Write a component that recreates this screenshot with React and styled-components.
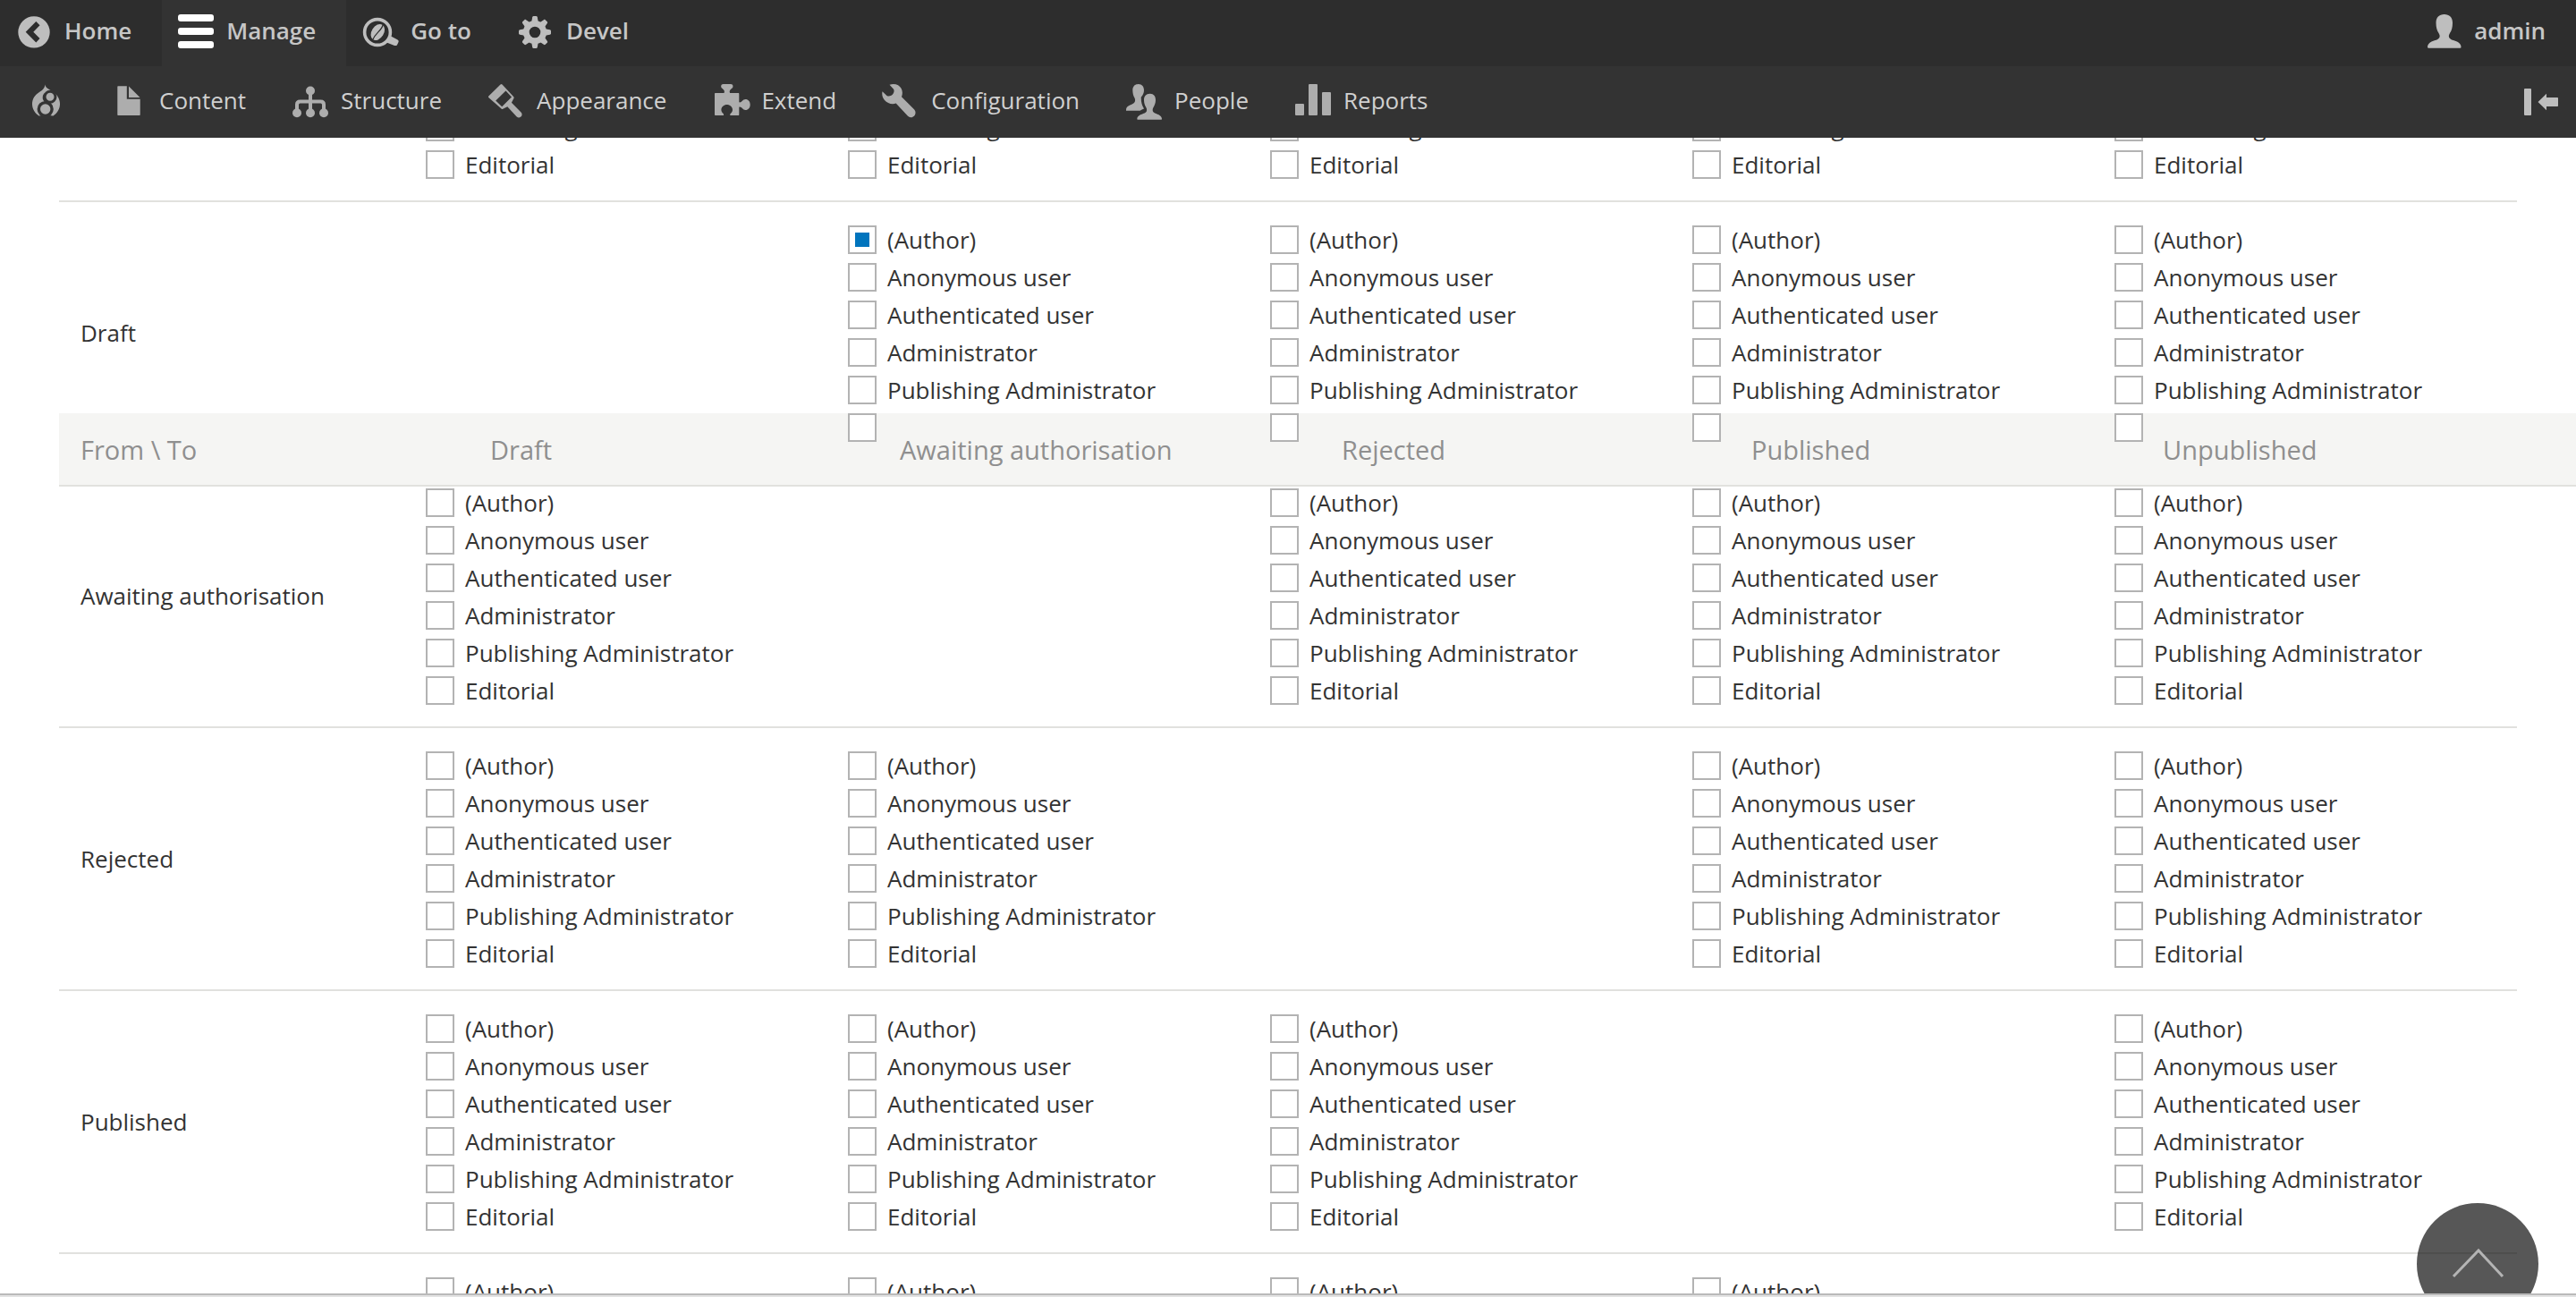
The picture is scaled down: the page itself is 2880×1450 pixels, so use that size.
import React, { useLayoutEffect, useRef, useState } from "react";
import styled, { createGlobalStyle } from "styled-components";

const GlobalStyle = createGlobalStyle`
  * {
    box-sizing: border-box;
  }
  body {
    margin: 0;
    background: #fff;
    color: #333;
    font-family: "Open Sans", "Noto Sans", sans-serif;
    font-size: 26px;
  }
`;

const Page = styled.div`
  display: flex;
  flex-direction: column;
  height: 100vh;
  overflow: hidden;
`;

const ToolbarBar = styled.nav`
  display: flex;
  flex: none;
  height: 74px;
  background: #2d2d2d;
`;

const ToolbarTab = styled.a`
  display: flex;
  align-items: center;
  gap: 14px;
  padding: 0 34px 2px 18px;
  margin-left: ${(props) => (props.$end ? "auto" : "0")};
  background: ${(props) => (props.$active ? "#333" : "transparent")};
  color: ${(props) => (props.$active ? "#fff" : "#bebebe")};
  text-decoration: none;
`;

const TabLabel = styled.span`
  padding-bottom: 4px;
  color: #c6c6c6;
  font-weight: 600;
  line-height: 36px;
`;

const Tray = styled.nav`
  display: flex;
  flex: none;
  align-items: center;
  height: 80px;
  padding: 0 20px 0 16px;
  background: #333;
`;

const TrayLink = styled.a`
  display: flex;
  align-items: center;
  gap: 14px;
  padding: 0 36px 0 16px;
  color: #adadad;
  text-decoration: none;
`;

const TrayLabel = styled.span`
  padding-bottom: 4px;
  color: #d0d0d0;
  line-height: 36px;
`;

const CollapseButton = styled.button`
  display: flex;
  margin-left: auto;
  padding: 0;
  border: 0;
  background: transparent;
  color: #bebebe;
  cursor: pointer;
`;

const Icon = styled.svg`
  display: block;
  flex: none;
  width: ${(props) => props.$width || 40}px;
  height: 40px;
  overflow: visible;
  fill: currentColor;
`;

const Main = styled.main`
  position: relative;
  flex: 1;
  min-height: 0;
  overflow: hidden;
`;

const Scroller = styled.div`
  height: 100%;
  padding: 0 66px;
  overflow-y: scroll;
  scrollbar-width: none;
`;

const Table = styled.table`
  width: 100%;
  border-collapse: collapse;
  table-layout: fixed;
`;

const FromColumn = styled.col`
  width: 388px;
`;

const Row = styled.tr`
  border-bottom: 2px solid #e1e1de;
`;

const RowTitle = styled.th`
  padding: 20px 24px;
  font-weight: 400;
  text-align: left;
  vertical-align: middle;
`;

const Cell = styled.td`
  height: 292px;
  padding: 20px 22px;
  vertical-align: middle;
`;

const Option = styled.label`
  display: flex;
  align-items: center;
  gap: 12px;
  height: 42px;
  padding-top: 2px;
  white-space: nowrap;
`;

const Checkbox = styled.input`
  position: relative;
  z-index: 2;
  flex: none;
  width: 32px;
  height: 32px;
  margin: 0;
  appearance: none;
  border: 2px solid #b3b3b3;
  background: #fff;

  &:checked {
    padding: 6px;
    background: #0074bd content-box;
    box-shadow: inset 0 0 0 6px #fff;
  }
`;

const StickyHeader = styled.table`
  position: absolute;
  top: 308px;
  left: 66px;
  z-index: 1;
  width: calc(100% - 66px);
  border-spacing: 0;
  table-layout: fixed;
`;

const HeaderColumn = styled.col`
  width: ${(props) => (props.$width ? `${props.$width}px` : "auto")};
`;

const HeaderCell = styled.th`
  height: 82px;
  padding: 0 24px;
  border-bottom: 2px solid #e1e1de;
  background: #f5f5f3;
  color: #8f8f8f;
  font-size: 29px;
  font-weight: 400;
  text-align: left;
  white-space: nowrap;
`;

const ToTop = styled.button`
  position: absolute;
  right: 42px;
  bottom: -35px;
  z-index: 3;
  display: flex;
  align-items: center;
  justify-content: center;
  width: 136px;
  height: 136px;
  padding: 0;
  border: 0;
  border-radius: 50%;
  background: rgba(16, 16, 16, 0.7);
  color: #b4b4b4;
  cursor: pointer;
`;

const WindowEdge = styled.footer`
  flex: none;
  height: 4px;
  border-top: 2px solid #bababa;
  background: #e3e3e3;
`;

const HomeIcon = () => (
  <Icon viewBox="0 0 40 40">
    <path
      fillRule="evenodd"
      d="M20 2.200a17.700 17.700 0 1 0 0 35.400 17.700 17.700 0 0 0 0-35.400zM22.300 8l4.200 4.300-7.200 7.400 7.200 7.300-4.200 4.500-11.600-11.800z"
    />
  </Icon>
);

const MenuIcon = () => (
  <Icon viewBox="0 0 40 40">
    <rect y="0" width="40" height="8" rx="3" />
    <rect y="15" width="40" height="8" rx="3" />
    <rect y="30" width="40" height="8" rx="3" />
  </Icon>
);

const GoToIcon = () => (
  <Icon viewBox="0 0 40 40">
    <circle cx="17" cy="20" r="14.400" fill="none" stroke="currentColor" strokeWidth="3.600" />
    <path d="M31.200 24l8 4.300c1.500.8 1.800 1.800 1.200 3l-1.300 2.600c-.6 1.100-1.800 1.500-3 1l-8.900-3.500z" />
    <ellipse cx="17.300" cy="20" rx="6.800" ry="9.800" transform="rotate(32 17.300 20)" />
    <path d="M23.200 11.500c-1.500 7-8 8.500-11.500 17" fill="none" stroke="#2d2d2d" strokeWidth="1.200" />
  </Icon>
);

const GearIcon = () => (
  <Icon viewBox="0 0 40 40">
    <circle cx="19" cy="20" r="9.700" fill="none" stroke="currentColor" strokeWidth="6.800" />
    {[0, 45, 90, 135, 180, 225, 270, 315].map((angle) => (
      <path
        key={angle}
        d="M15 10l1.200-6.800c.2-.8.6-1.200 1.300-1.200h3c.7 0 1.100.4 1.300 1.200L23 10z"
        transform={`rotate(${angle} 19 20)`}
      />
    ))}
  </Icon>
);

const UserIcon = () => (
  <Icon $width={38} viewBox="0 0 38 40">
    <path d="M18.700 0c-5.800 0-9.200 3.500-9.200 9.500 0 5 1 8.500 3 11.500 1.200 2 1.500 3.500.8 5-1.300 2.500-5.300 3-8.800 4.500C1.500 32 0 34 0 36.500c0 .8.300 1.200 1 1.200h35.500c.7 0 1-.4 1-1.200 0-2.500-1.500-4.500-4.500-6-3.500-1.500-7.500-2-8.800-4.500-.7-1.500-.4-3 .8-5 2-3 3-6.500 3-11.500 0-6-3.500-9.500-9.300-9.500z" />
  </Icon>
);

const DropIcon = () => (
  <Icon viewBox="0 0 40 40">
    <path d="M18.300.5c.8 4 4.200 5 7.700 7.200C32 11.500 35 16.500 35 22.300c0 5.500-3 10.200-7.500 13.200h-16C7 32.500 4 27.800 4 22.300 4 16.500 7.200 12 12 9c4-2.500 6-4.500 6.300-8.500z" />
    <circle cx="24" cy="14.300" r="6" fill="none" stroke="#333" strokeWidth="3" />
    <circle cx="18.700" cy="28" r="7.400" fill="none" stroke="#333" strokeWidth="3.400" />
    <path d="M10.500 36.500q8 -4 18 0v3h-18z" fill="#333" />
    <path d="M18.500 11c-2.500 3.500-1.500 6 1 9" fill="none" stroke="#333" strokeWidth="3" />
  </Icon>
);

const ContentIcon = () => (
  <Icon viewBox="0 0 40 40">
    <path d="M8 2.300h9.800v14.400h14.900v17.600c0 .5-.2.700-.7.700H8c-.5 0-.7-.2-.7-.7V3c0-.5.2-.7.700-.7z" />
    <path d="M20 2.600L32.500 15H20z" />
  </Icon>
);

const StructureIcon = () => (
  <Icon viewBox="0 0 40 40">
    <circle cx="20" cy="7.500" r="5" />
    <circle cx="5" cy="32.300" r="5" />
    <circle cx="20" cy="32.300" r="5" />
    <circle cx="35" cy="32.300" r="5" />
    <path
      d="M20 8v23M5 31v-8q0-3.500 3.500-3.500h23q3.500 0 3.500 3.500v8"
      fill="none"
      stroke="currentColor"
      strokeWidth="4"
    />
  </Icon>
);

const AppearanceIcon = () => (
  <Icon viewBox="0 0 40 40">
    <path
      fillRule="evenodd"
      d="M13.500.6c.7-.7 1.300-.7 2 0l12.800 13.700c.5.600.5 1.200.1 1.800l-2.500 4.700 10.600 10.700c3.200 3.400-1.500 8-4.800 4.900L21.300 25.200l-5 2.500c-.7.400-1.300.3-1.800-.3L.5 15.200c-.7-.7-.7-1.300 0-2zM19.500 7.500L8.200 18.500l7 6.700L26 14.500z"
    />
  </Icon>
);

const ExtendIcon = () => (
  <Icon viewBox="0 0 40 40">
    <path d="M3 10h9.500c1.200-2.500-.5-3.800-2.500-5.500C8.500 3 9 0 11.500 0h8.600c2.500 0 3 3 1.500 4.500-2 1.700-3.600 3-2.500 5.500h9.200c.7 0 1 .3 1 1v9.300c3 1 3.700-3.300 7.200-3.300 3 0 5.200 2.500 5.200 6s-2.200 6-5.200 6c-3.500 0-4.200-4.300-7.200-3.300V34c0 .7-.3 1-1 1h-8.800c-1.500-2 2.500-2.500 2.500-6.300 0-3.200-2.900-5.700-6.300-5.700s-6.300 2.500-6.300 5.700c0 3.800 4 4.300 2.500 6.300H3c-.7 0-1-.3-1-1V11c0-.7.300-1 1-1z" />
  </Icon>
);

const ConfigurationIcon = () => (
  <Icon viewBox="0 0 40 40">
    <path d="M7.500.8C13-1.200 18.500.8 20.700 5c1.500 3 1.500 6.200.3 9.300l14 14c4.500 5-2 12-7 7.500L14.700 21.600c-4.500 1.500-9.700 0-12.700-3.600-2.500-3-3.200-6.500-2.500-9.700l5 4.700c2 1 4.500.5 6.300-1.200 1.700-1.800 2.200-4 1.300-6z" />
  </Icon>
);

const PeopleIcon = () => (
  <Icon viewBox="0 0 40 40">
    <path d="M13.700 0C9.500 0 7.300 3 7.300 6.800c0 3.700.9 6.500 2.200 8.700 1 2 .8 4.700-1.200 6C5.200 23.500 0 24.500 0 28.700v1h15.500c1.500-1 3-1.500 4.500-2.200-2.500-4-3.500-8.500-3.200-13 2.200-2.500 3.200-4.500 3.200-7.700C20 3 17.900 0 13.700 0z" />
    <path
      d="M26.700 10.700c-4.500 0-6.700 3-6.700 7 0 3.500.9 6 2.300 8.300 1.200 2 1.200 4.500-.5 5.800-2.700 2-9.500 2.500-9.500 7.300 0 .4.200.7.700.7h26.300c.5 0 .7-.3.700-.7 0-4.800-6.300-5.300-9-7.300-1.700-1.300-1.700-3.800-.5-5.800 1.400-2.300 2.500-4.800 2.500-8.300 0-4-2-7-6.300-7z"
      stroke="#333"
      strokeWidth="2.400"
      paintOrder="stroke"
    />
  </Icon>
);

const ReportsIcon = () => (
  <Icon viewBox="0 0 40 40">
    <rect x="0" y="22" width="10" height="13" rx="1" />
    <rect x="15" y="0" width="10" height="35" rx="1" />
    <rect x="30" y="9" width="10" height="26" rx="1" />
  </Icon>
);

const CollapseIcon = () => (
  <Icon viewBox="0 0 40 40">
    <rect x="2" y="5" width="8" height="30" rx="1" />
    <path d="M17.500 20L27 10.700V15h12c.7 0 1 .3 1 1v8c0 .7-.3 1-1 1H27v4.300z" />
  </Icon>
);

const trayLinks = [
  { title: "Content", icon: ContentIcon },
  { title: "Structure", icon: StructureIcon },
  { title: "Appearance", icon: AppearanceIcon },
  { title: "Extend", icon: ExtendIcon },
  { title: "Configuration", icon: ConfigurationIcon },
  { title: "People", icon: PeopleIcon },
  { title: "Reports", icon: ReportsIcon },
];

const roles = [
  "(Author)",
  "Anonymous user",
  "Authenticated user",
  "Administrator",
  "Publishing Administrator",
  "Editorial",
];

const states = ["Draft", "Awaiting authorisation", "Rejected", "Published", "Unpublished"];
const fromStates = ["(creation)", ...states];
const headerWidths = [458, 458, 494, 458, 460];

const Transitions = ({ from, to }) => {
  const [checked, setChecked] = useState(
    from === "Draft" && to === "Awaiting authorisation" ? ["(Author)"] : []
  );

  const toggle = (role) => {
    setChecked(
      checked.includes(role) ? checked.filter((item) => item !== role) : [...checked, role]
    );
  };

  return roles.map((role) => (
    <Option key={role}>
      <Checkbox type="checkbox" checked={checked.includes(role)} onChange={() => toggle(role)} />
      <span>{role}</span>
    </Option>
  ));
};

const App = () => {
  const scroller = useRef(null);

  // the page opens part way down the first row
  useLayoutEffect(() => {
    scroller.current.scrollTop = 222;
  }, []);

  return (
    <Page>
      <GlobalStyle />
      <ToolbarBar>
        <ToolbarTab href="#home">
          <HomeIcon />
          <TabLabel>Home</TabLabel>
        </ToolbarTab>
        <ToolbarTab href="#manage" $active>
          <MenuIcon />
          <TabLabel>Manage</TabLabel>
        </ToolbarTab>
        <ToolbarTab href="#goto">
          <GoToIcon />
          <TabLabel>Go to</TabLabel>
        </ToolbarTab>
        <ToolbarTab href="#devel">
          <GearIcon />
          <TabLabel>Devel</TabLabel>
        </ToolbarTab>
        <ToolbarTab href="#user" $end>
          <UserIcon />
          <TabLabel>admin</TabLabel>
        </ToolbarTab>
      </ToolbarBar>

      <Tray>
        <TrayLink href="#drupal" aria-label="Drupal">
          <DropIcon />
        </TrayLink>
        {trayLinks.map(({ title, icon: LinkIcon }) => (
          <TrayLink key={title} href={`#${title.toLowerCase()}`}>
            <LinkIcon />
            <TrayLabel>{title}</TrayLabel>
          </TrayLink>
        ))}
        <CollapseButton type="button" aria-label="Vertical orientation">
          <CollapseIcon />
        </CollapseButton>
      </Tray>

      <Main>
        <Scroller ref={scroller}>
          <Table>
            <colgroup>
              <FromColumn />
              {states.map((state) => (
                <col key={state} />
              ))}
            </colgroup>
            <tbody>
              {fromStates.map((from) => (
                <Row key={from}>
                  <RowTitle scope="row">{from}</RowTitle>
                  {states.map((to) => (
                    <Cell key={to}>{from !== to && <Transitions from={from} to={to} />}</Cell>
                  ))}
                </Row>
              ))}
            </tbody>
          </Table>
        </Scroller>

        <StickyHeader>
          <colgroup>
            {headerWidths.map((width, index) => (
              <HeaderColumn key={index} $width={width} />
            ))}
            <HeaderColumn />
          </colgroup>
          <thead>
            <tr>
              <HeaderCell scope="col">From \ To</HeaderCell>
              {states.map((state) => (
                <HeaderCell key={state} scope="col">
                  {state}
                </HeaderCell>
              ))}
            </tr>
          </thead>
        </StickyHeader>

        <ToTop
          type="button"
          aria-label="Back to top"
          onClick={() => scroller.current.scrollTo({ top: 0, behavior: "smooth" })}
        >
          <svg width="60" height="36" viewBox="0 0 60 36">
            <path d="M3 32L31 3l27 29" fill="none" stroke="currentColor" strokeWidth="3" />
          </svg>
        </ToTop>
      </Main>
      <WindowEdge />
    </Page>
  );
};

export default App;
